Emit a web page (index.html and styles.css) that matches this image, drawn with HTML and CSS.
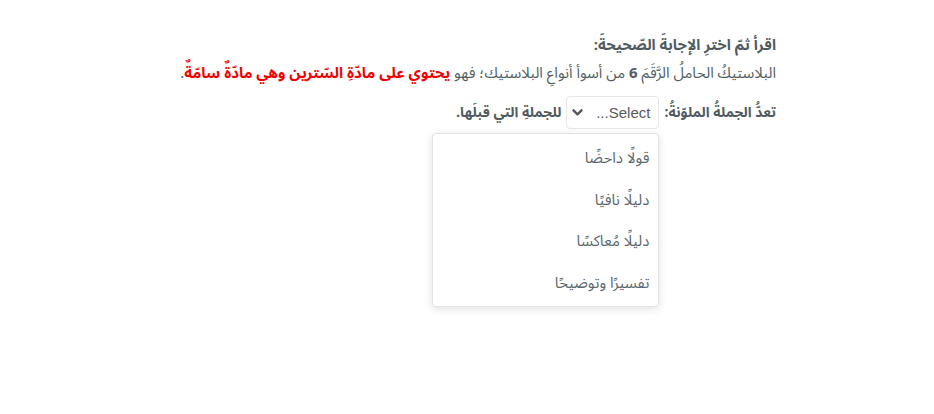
FILE: index.html
```html
<!DOCTYPE html>
<html lang="ar" dir="rtl">
<head>
    <meta charset="UTF-8">
    <meta name="viewport" content="width=device-width, initial-scale=1.0">
    <title>سؤال</title>
    <link rel="stylesheet" href="styles.css">
</head>
<body>

<div class="question">
    <p class="instruction">اقرأ ثمّ اخترِ الإجابةَ الصّحيحةَ:</p>
    <p class="passage">البلاستيكُ الحاملُ الرَّقَمَ <b>6</b> من أسوأ أنواعِ البلاستيك؛ فهو <span class="red">يحتوي على مادّةِ السّترين وهي مادّةٌ سامّةٌ</span>.</p>

    <div class="answer-line">
        <span class="label">تعدُّ الجملةُ الملوّنةُ:</span>
        <div class="select-wrap">
            <div class="select">
                <span class="placeholder">Select...</span>
                <svg class="chevron" width="13" height="13" viewBox="0 0 12 12">
                    <path d="M2.3 4 L6 7.7 L9.7 4" fill="none" stroke="#555" stroke-width="2.2" stroke-linecap="round" stroke-linejoin="round"/>
                </svg>
            </div>
            <div class="menu">
                <div class="option">قولًا داحضًا</div>
                <div class="option">دليلًا نافيًا</div>
                <div class="option">دليلًا مُعاكسًا</div>
                <div class="option">تفسيرًا وتوضيحًا</div>
            </div>
        </div>
        <span class="label">للجملةِ التي قبلَها.</span>
    </div>
</div>

</body>
</html>
```

FILE: styles.css
```css
html, body {
    height: 100%;
}

body {
    margin: 0;
    background-color: #ffffff;
    color: #525f65;
    font-family: 'Noto Sans Arabic', 'DejaVu Sans', sans-serif;
    direction: rtl;
}

.question {
    width: 618px;
    min-height: 340px;
    margin: 0 auto;
    padding-top: 31px;
}

.instruction {
    margin: 0;
    font-size: 15px;
    font-weight: bold;
    line-height: 28px;
    color: #4f5b61;
}

.passage {
    margin: 0;
    font-size: 15px;
    line-height: 28px;
}

.passage b {
    font-weight: bold;
}

.red {
    color: #f20000;
    font-weight: bold;
}

.answer-line {
    display: flex;
    align-items: center;
    gap: 5px;
    margin-top: 9px;
}

.label {
    font-size: 14px;
    font-weight: bold;
    color: #4f5b61;
}

.select-wrap {
    position: relative;
}

.select {
    display: flex;
    align-items: center;
    gap: 8px;
    width: 93px;
    height: 33px;
    box-sizing: border-box;
    padding: 0 8px 0 4px;
    border: 1px solid #e6e6e6;
    border-radius: 4px;
    font-family: 'Liberation Sans', sans-serif;
    font-size: 15px;
    color: #5a5a5a;
}

.placeholder {
    flex: 1;
}

.menu {
    position: absolute;
    top: 37px;
    right: 0;
    z-index: 10;
    width: 227px;
    box-sizing: border-box;
    padding: 4px 0 2px;
    background: #fff;
    border: 1px solid #e2e2e2;
    border-radius: 4px;
    box-shadow: 0 2px 8px rgba(0, 0, 0, 0.12);
}

.option {
    padding: 0 9px;
    height: 41.5px;
    line-height: 41.5px;
    font-size: 15px;
    color: #5a676d;
}
```
